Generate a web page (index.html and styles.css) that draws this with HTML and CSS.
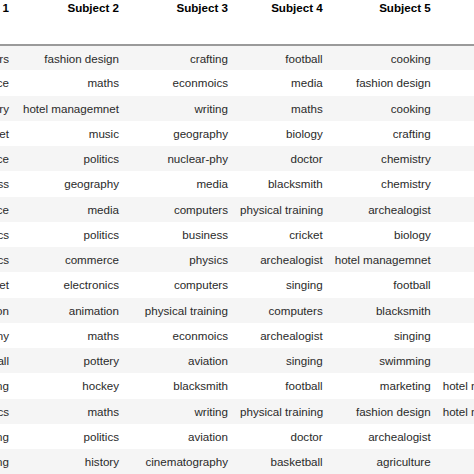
FILE: index.html
```html
<!DOCTYPE html>
<html>
<head>
<meta charset="utf-8">
<link rel="stylesheet" href="styles.css">
</head>
<body>
<div class="frame">
<table class="df">
  <colgroup>
    <col class="c1"><col class="c2"><col class="c3"><col class="c4"><col class="c5"><col class="c6">
  </colgroup>
  <thead>
    <tr class="hrow"><th>Subject 1</th><th>Subject 2</th><th>Subject 3</th><th>Subject 4</th><th>Subject 5</th><th>Subject 6</th></tr>
    <tr class="hrow hlast"><th></th><th></th><th></th><th></th><th></th><th></th></tr>
  </thead>
  <tbody>
    <tr><td>computers</td><td>fashion design</td><td>crafting</td><td>football</td><td>cooking</td><td>maths</td></tr>
    <tr><td>commerce</td><td>maths</td><td>econmoics</td><td>media</td><td>fashion design</td><td>music</td></tr>
    <tr><td>history</td><td>hotel managemnet</td><td>writing</td><td>maths</td><td>cooking</td><td>media</td></tr>
    <tr><td>cricket</td><td>music</td><td>geography</td><td>biology</td><td>crafting</td><td>pottery</td></tr>
    <tr><td>science</td><td>politics</td><td>nuclear-phy</td><td>doctor</td><td>chemistry</td><td>history</td></tr>
    <tr><td>business</td><td>geography</td><td>media</td><td>blacksmith</td><td>chemistry</td><td>maths</td></tr>
    <tr><td>commerce</td><td>media</td><td>computers</td><td>physical training</td><td>archealogist</td><td>singing</td></tr>
    <tr><td>politics</td><td>politics</td><td>business</td><td>cricket</td><td>biology</td><td>doctor</td></tr>
    <tr><td>electronics</td><td>commerce</td><td>physics</td><td>archealogist</td><td>hotel managemnet</td><td>media</td></tr>
    <tr><td>cricket</td><td>electronics</td><td>computers</td><td>singing</td><td>football</td><td>writing</td></tr>
    <tr><td>animation</td><td>animation</td><td>physical training</td><td>computers</td><td>blacksmith</td><td>maths</td></tr>
    <tr><td>botany</td><td>maths</td><td>econmoics</td><td>archealogist</td><td>singing</td><td>cooking</td></tr>
    <tr><td>football</td><td>pottery</td><td>aviation</td><td>singing</td><td>swimming</td><td>hockey</td></tr>
    <tr><td>singing</td><td>hockey</td><td>blacksmith</td><td>football</td><td>marketing</td><td>hotel managemnet</td></tr>
    <tr><td>physics</td><td>maths</td><td>writing</td><td>physical training</td><td>fashion design</td><td>hotel managemnet</td></tr>
    <tr><td>writing</td><td>politics</td><td>aviation</td><td>doctor</td><td>archealogist</td><td>music</td></tr>
    <tr><td>crafting</td><td>history</td><td>cinematography</td><td>basketball</td><td>agriculture</td><td>media</td></tr>
  </tbody>
</table>
</div>
</body>
</html>
```
FILE: styles.css
```css
html, body {
  margin: 0;
  padding: 0;
  background: #ffffff;
}

body {
  width: 474px;
  height: 474px;
  overflow: hidden;
}

.frame {
  width: 474px;
  height: 474px;
  overflow: hidden;
}

.df {
  border-collapse: collapse;
  table-layout: fixed;
  width: 601.7px;
  margin-top: -5px;
  margin-left: -57px;
  font-family: "Liberation Sans", Arial, sans-serif;
  font-size: 11.6px;
  color: #2a2a2a;
}

.c1 { width: 72px; }
.c2 { width: 110px; }
.c3 { width: 109px; }
.c4 { width: 94.7px; }
.c5 { width: 108px; }
.c6 { width: 108px; }

.df th,
.df td {
  box-sizing: border-box;
  padding: 0 6px;
  text-align: right;
  vertical-align: middle;
  white-space: nowrap;
  border: none;
}

.df th {
  font-weight: bold;
  color: #000000;
}

.hrow {
  height: 25px;
}

.hlast th {
  border-bottom: 2px solid #9a9a9a;
}

.df tbody tr {
  height: 25.25px;
}

.df tbody tr:nth-child(odd) {
  background: #f5f5f5;
}
```
